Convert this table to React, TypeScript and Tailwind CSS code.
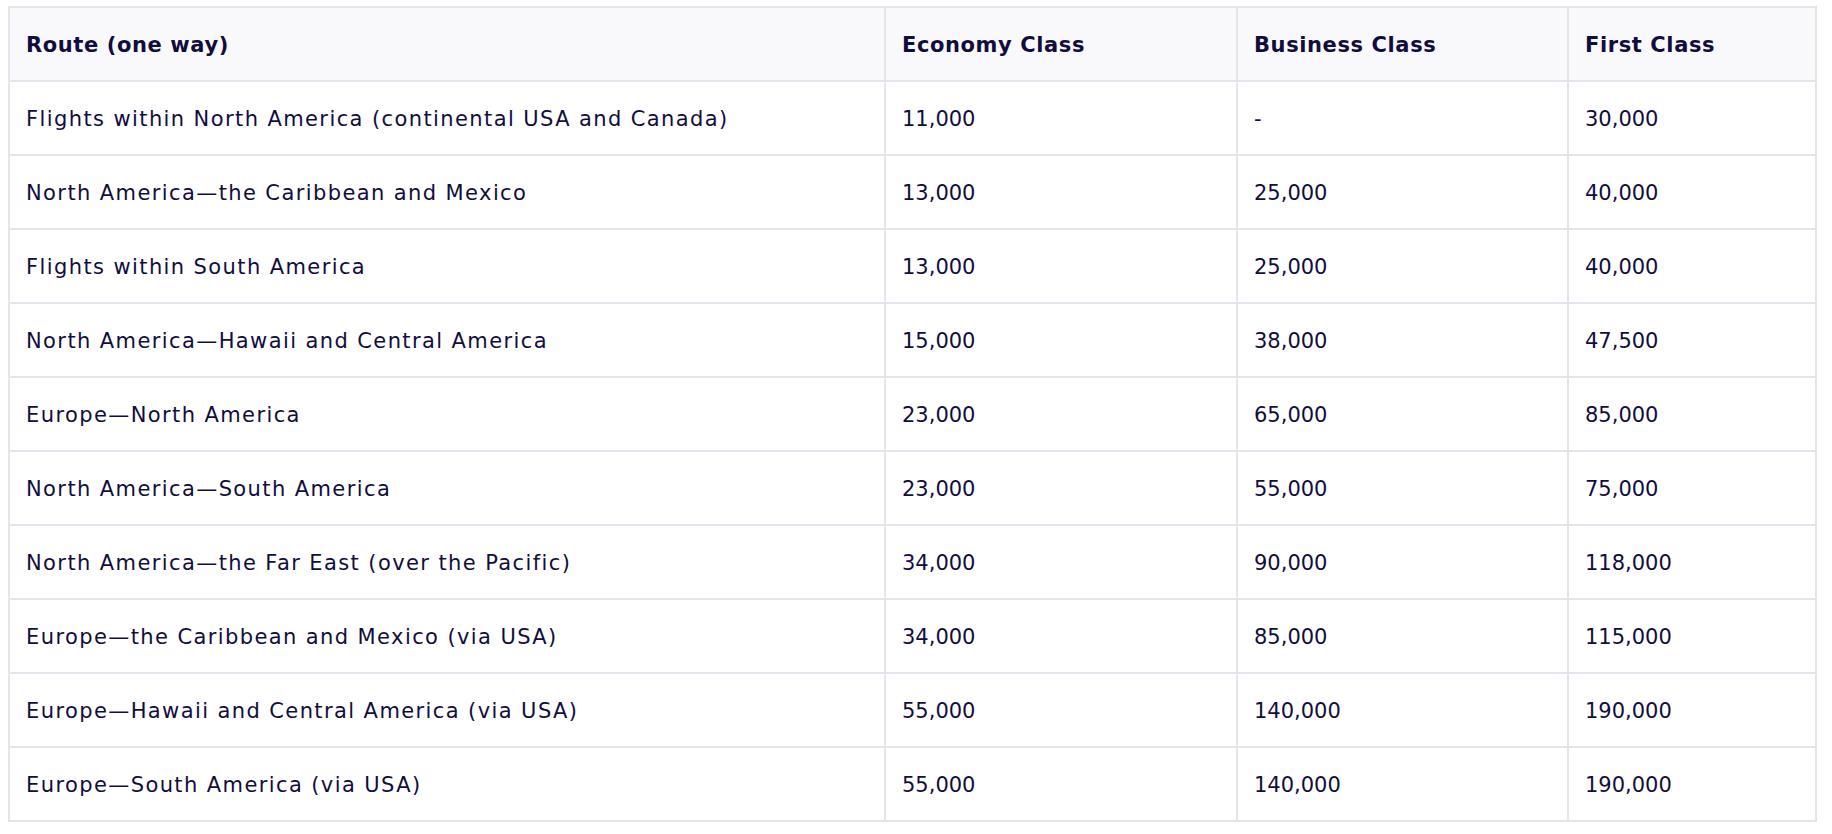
const rows: [string, string, string, string][] = [
  ["Flights within North America (continental USA and Canada)", "11,000", "-", "30,000"],
  ["North America\u2014the Caribbean and Mexico", "13,000", "25,000", "40,000"],
  ["Flights within South America", "13,000", "25,000", "40,000"],
  ["North America\u2014Hawaii and Central America", "15,000", "38,000", "47,500"],
  ["Europe\u2014North America", "23,000", "65,000", "85,000"],
  ["North America\u2014South America", "23,000", "55,000", "75,000"],
  ["North America\u2014the Far East (over the Pacific)", "34,000", "90,000", "118,000"],
  ["Europe\u2014the Caribbean and Mexico (via USA)", "34,000", "85,000", "115,000"],
  ["Europe\u2014Hawaii and Central America (via USA)", "55,000", "140,000", "190,000"],
  ["Europe\u2014South America (via USA)", "55,000", "140,000", "190,000"],
];

const cell = "border-2 border-[#e4e4ec] px-4 pt-1 h-[74px] align-middle";

export default function App() {
  return (
    <div className="bg-white w-[1832px] h-[834px] pt-[6px] pl-[8px] font-['DejaVu_Sans',Verdana,sans-serif] text-[#110d3e] text-[21px]">
      <table className="border-collapse w-[1807px] table-fixed">
        <colgroup>
          <col className="w-[876px]" />
          <col className="w-[352px]" />
          <col className="w-[331px]" />
          <col className="w-[248px]" />
        </colgroup>
        <thead>
          <tr className="bg-[#f9f9fb] text-left font-bold tracking-[0.6px]">
            <th className={cell}>Route (one way)</th>
            <th className={cell}>Economy Class</th>
            <th className={cell}>Business Class</th>
            <th className={cell}>First Class</th>
          </tr>
        </thead>
        <tbody>
          {rows.map((r, i) => (
            <tr key={i}>
              <td className={`${cell} tracking-[1.4px]`}>{r[0]}</td>
              <td className={cell}>{r[1]}</td>
              <td className={cell}>{r[2]}</td>
              <td className={cell}>{r[3]}</td>
            </tr>
          ))}
        </tbody>
      </table>
    </div>
  );
}
